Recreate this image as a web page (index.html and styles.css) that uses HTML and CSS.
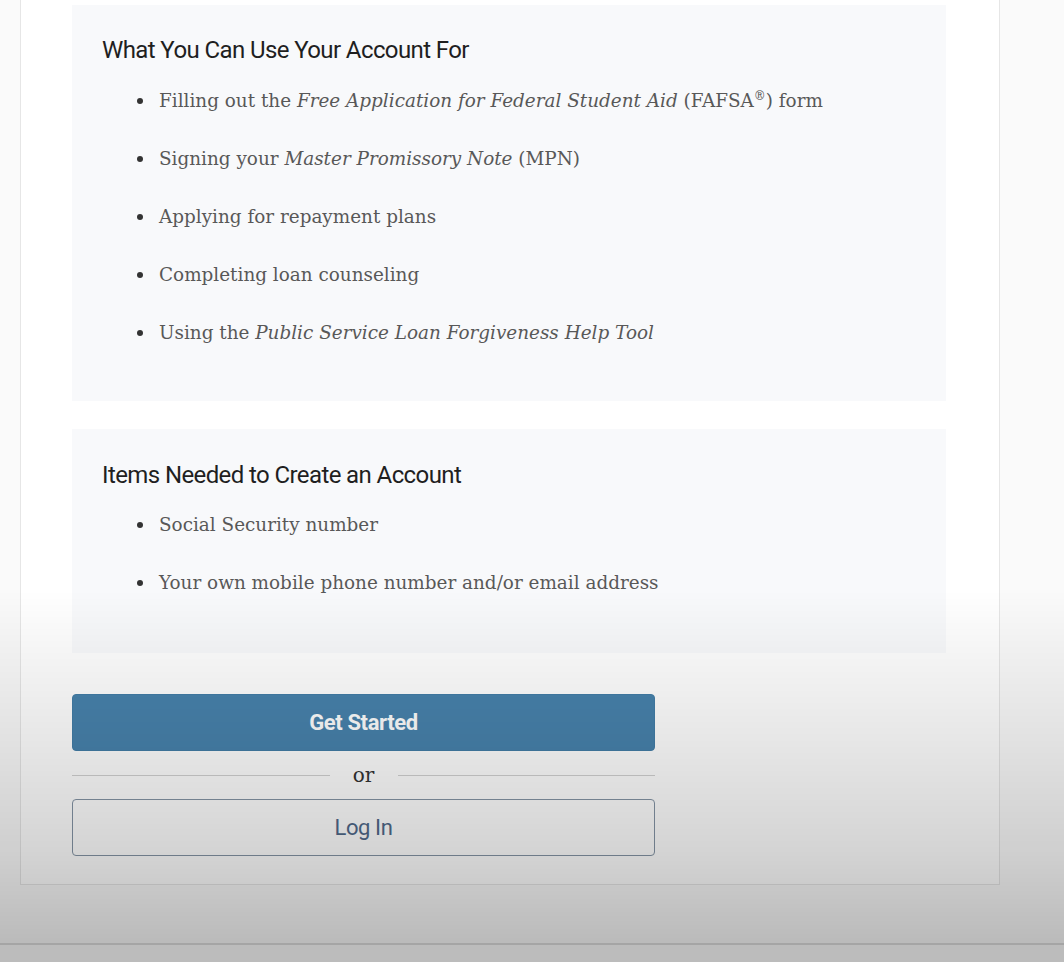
FILE: index.html
```html
<!DOCTYPE html>
<html lang="en">
<head>
<meta charset="utf-8">
<title>Create Account</title>
<link rel="stylesheet" href="styles.css">
</head>
<body>
<div class="page">
  <main class="card">
    <section class="panel panel-first">
      <h2 class="panel-title">What You Can Use Your Account For</h2>
      <ul class="list">
        <li><span>Filling out the <em>Free Application for Federal Student Aid</em> (FAFSA<sup>®</sup>) form</span></li>
        <li><span>Signing your <em>Master Promissory Note</em> (MPN)</span></li>
        <li><span>Applying for repayment plans</span></li>
        <li><span>Completing loan counseling</span></li>
        <li><span>Using the <em>Public Service Loan Forgiveness Help Tool</em></span></li>
      </ul>
    </section>
    <section class="panel panel-second">
      <h2 class="panel-title">Items Needed to Create an Account</h2>
      <ul class="list">
        <li><span>Social Security number</span></li>
        <li><span>Your own mobile phone number and/or email address</span></li>
      </ul>
    </section>
    <div class="actions">
      <button class="btn btn-primary" type="button">Get Started</button>
      <div class="divider"><span class="divider-line"></span><span class="divider-text">or</span><span class="divider-line"></span></div>
      <button class="btn btn-outline" type="button">Log In</button>
    </div>
  </main>
  <footer class="footer"></footer>
</div>
<div class="vignette"></div>
</body>
</html>
```

FILE: styles.css
```css
html, body {
  margin: 0;
  padding: 0;
}
body {
  background: #fafafa;
  width: 1064px;
  height: 962px;
  overflow: hidden;
}
.page {
  display: flex;
  flex-direction: column;
  height: 962px;
}
.card {
  margin-left: 20px;
  width: 980px;
  background: #ffffff;
  border: 1px solid #e6e6e6;
  border-top: none;
  padding: 5px 52px 28px 51px;
  box-sizing: border-box;
}
.panel {
  background: #f8f9fb;
  padding: 30px 30px 54px 30px;
  width: 874px;
  box-sizing: border-box;
}
.panel-second {
  margin-top: 28px;
  padding-top: 31px;
  padding-bottom: 56px;
}
.panel-title {
  margin: 0;
  font-family: "Liberation Sans Narrow", "Roboto", sans-serif;
  font-weight: 400;
  font-size: 24px;
  line-height: 30px;
  letter-spacing: -0.6px;
  color: #1f1f1f;
}
.list {
  list-style: none;
  margin: 22px 0 0 0;
  padding: 0 0 0 35px;
}
.panel-second .list {
  margin-top: 21px;
}
.list li {
  display: flex;
  align-items: center;
  font-family: "DejaVu Serif", serif;
  font-size: 18.4px;
  line-height: 28px;
  color: #585858;
  white-space: nowrap;
}
.list li::before {
  content: "";
  flex: none;
  width: 6px;
  height: 6px;
  border-radius: 50%;
  background: #333333;
  margin-right: 16px;
}
.list li + li {
  margin-top: 30px;
}
.list em {
  font-style: italic;
}
.list sup {
  font-size: 0.65em;
  line-height: 0;
}
.actions {
  margin-top: 41px;
  width: 583px;
  display: flex;
  flex-direction: column;
}
.btn {
  display: block;
  width: 583px;
  height: 57px;
  border-radius: 4px;
  font-family: "Liberation Sans Narrow", "Roboto", sans-serif;
  font-size: 22px;
  letter-spacing: -0.4px;
  cursor: pointer;
  box-sizing: border-box;
}
.btn-primary {
  background: #4883ad;
  border: 1px solid #437ea8;
  color: #ffffff;
  font-weight: 700;
}
.btn-outline {
  background: transparent;
  border: 1px solid #8595a6;
  color: #50698a;
  font-weight: 400;
}
.divider {
  height: 48px;
  display: flex;
  align-items: center;
}
.divider-line {
  flex: 1;
  height: 1px;
  background: #d2d2d2;
}
.divider-text {
  width: 68px;
  text-align: center;
  font-family: "DejaVu Serif", serif;
  font-size: 20px;
  color: #333333;
  line-height: 24px;
}
.footer {
  margin-top: 58px;
  flex: 1;
  border-top: 2px solid #dcdcdc;
  background: #fbfbfb;
}
.vignette {
  position: fixed;
  left: 0;
  top: 0;
  width: 1064px;
  height: 962px;
  pointer-events: none;
  background: linear-gradient(to bottom,
    rgba(0,0,0,0) 0px,
    rgba(0,0,0,0) 590px,
    rgba(0,0,0,0.04) 650px,
    rgba(0,0,0,0.1) 750px,
    rgba(0,0,0,0.17) 850px,
    rgba(0,0,0,0.25) 940px,
    rgba(0,0,0,0.25) 962px);
}
```
